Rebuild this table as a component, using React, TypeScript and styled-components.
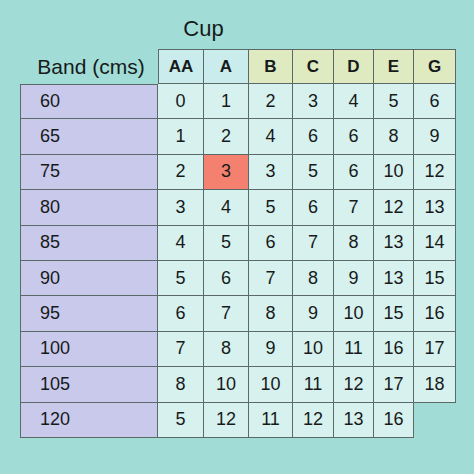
import React from 'react';
import styled, { createGlobalStyle } from 'styled-components';

const GlobalStyle = createGlobalStyle`
  html, body {
    margin: 0;
    padding: 0;
    background: #a1ddd6;
  }
  body {
    font-family: "Liberation Sans", Arial, sans-serif;
    color: #161a1a;
  }
`;

const Page = styled.div`
  width: 474px;
  height: 474px;
  background: #a1ddd6;
  padding-left: 20px;
  box-sizing: border-box;
`;

const Grid = styled.div`
  display: grid;
  grid-template-columns: 138px 46px 45px 44px 41px 40px 40px 42px;
  grid-template-rows: 49px 35px repeat(10, 35.4px);
`;

const Spacer = styled.div<{ $span: number }>`
  grid-column: span ${p => p.$span};
`;

const CupTitle = styled.div`
  grid-column: span 2;
  align-self: end;
  margin-bottom: 8px;
  text-align: center;
  font-size: 22px;
  line-height: 25px;
`;

const BandTitle = styled.div`
  display: flex;
  align-items: center;
  justify-content: center;
  font-size: 21px;
  padding-left: 4px;
`;

const Cell = styled.div<{ $first?: boolean; $top?: boolean }>`
  box-sizing: border-box;
  display: flex;
  align-items: center;
  justify-content: center;
  font-size: 18px;
  border-right: 1px solid #5b6a69;
  border-bottom: 1px solid #5b6a69;
  border-left: ${p => (p.$first ? '1px solid #5b6a69' : 'none')};
  border-top: ${p => (p.$top ? '1px solid #5b6a69' : 'none')};
`;

const CupHead = styled(Cell)<{ $tone: 'cyan' | 'lime' }>`
  background: ${p => (p.$tone === 'cyan' ? '#caecec' : '#dfeac1')};
  font-size: 17px;
  font-weight: 700;
`;

const BandCell = styled(Cell)`
  background: #c9c9ec;
  justify-content: flex-start;
  padding-left: 19px;
`;

const ValueCell = styled(Cell)<{ $hot?: boolean }>`
  background: ${p => (p.$hot ? '#f4806f' : '#d7f1ee')};
`;

const cups = ['AA', 'A', 'B', 'C', 'D', 'E', 'G'];

const rows: { band: number; values: number[] }[] = [
  { band: 60, values: [0, 1, 2, 3, 4, 5, 6] },
  { band: 65, values: [1, 2, 4, 6, 6, 8, 9] },
  { band: 75, values: [2, 3, 3, 5, 6, 10, 12] },
  { band: 80, values: [3, 4, 5, 6, 7, 12, 13] },
  { band: 85, values: [4, 5, 6, 7, 8, 13, 14] },
  { band: 90, values: [5, 6, 7, 8, 9, 13, 15] },
  { band: 95, values: [6, 7, 8, 9, 10, 15, 16] },
  { band: 100, values: [7, 8, 9, 10, 11, 16, 17] },
  { band: 105, values: [8, 10, 10, 11, 12, 17, 18] },
  { band: 120, values: [5, 12, 11, 12, 13, 16] },
];

const App: React.FC = () => {
  return (
    <Page>
      <GlobalStyle />
      <Grid>
        <Spacer $span={1} />
        <CupTitle>Cup</CupTitle>
        <Spacer $span={5} />
        <BandTitle>Band (cms)</BandTitle>
        {cups.map((c, i) => (
          <CupHead key={c} $top $first={i === 0} $tone={i < 2 ? 'cyan' : 'lime'}>
            {c}
          </CupHead>
        ))}
        {rows.map((r, ri) => (
          <React.Fragment key={r.band}>
            <BandCell $first $top={ri === 0}>{r.band}</BandCell>
            {r.values.map((v, vi) => (
              <ValueCell key={vi} $hot={r.band === 75 && vi === 1}>
                {v}
              </ValueCell>
            ))}
          </React.Fragment>
        ))}
      </Grid>
    </Page>
  );
};

export default App;
